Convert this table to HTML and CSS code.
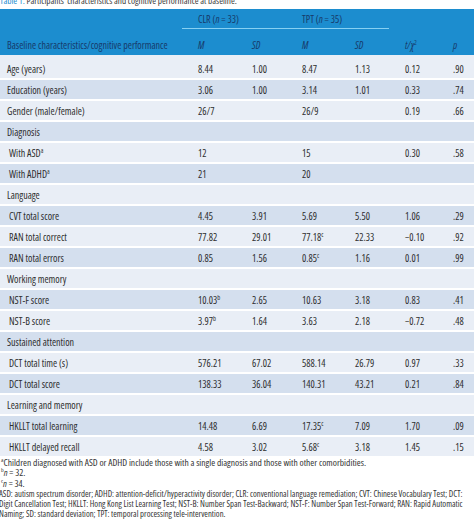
FILE: index.html
```html
<!DOCTYPE html>
<html>
<head>
<meta charset="utf-8">
<link rel="stylesheet" href="styles.css">
</head>
<body>
<div class="page">
  <div class="caption"><span class="cap-label">Table 1.</span> Participants’ characteristics and cognitive performance at baseline.</div>
  <table class="data">
    <colgroup>
      <col class="c-label"><col class="c-m1"><col class="c-sd1"><col class="c-m2"><col class="c-sd2"><col class="c-t"><col class="c-p">
    </colgroup>
    <thead>
      <tr class="h1">
        <th></th>
        <th class="grp" colspan="2">CLR (<i>n</i> = 33)</th>
        <th class="grp" colspan="2">TPT (<i>n</i> = 35)</th>
        <th></th>
        <th></th>
      </tr>
      <tr class="h2">
        <th class="lbl">Baseline characteristics/cognitive performance</th>
        <th><i>M</i></th>
        <th><i>SD</i></th>
        <th><i>M</i></th>
        <th><i>SD</i></th>
        <th><i>t/χ</i><sup>2</sup></th>
        <th><i>p</i></th>
      </tr>
    </thead>
    <tbody>
      <tr class="first"><td>Age (years)</td><td>8.44</td><td>1.00</td><td>8.47</td><td>1.13</td><td>0.12</td><td>.90</td></tr>
      <tr><td>Education (years)</td><td>3.06</td><td>1.00</td><td>3.14</td><td>1.01</td><td>0.33</td><td>.74</td></tr>
      <tr><td>Gender (male/female)</td><td>26/7</td><td></td><td>26/9</td><td></td><td>0.19</td><td>.66</td></tr>
      <tr><td>Diagnosis</td><td></td><td></td><td></td><td></td><td></td><td></td></tr>
      <tr><td class="sub">With ASD<sup>a</sup></td><td>12</td><td></td><td>15</td><td></td><td>0.30</td><td>.58</td></tr>
      <tr><td class="sub">With ADHD<sup>a</sup></td><td>21</td><td></td><td>20</td><td></td><td></td><td></td></tr>
      <tr><td>Language</td><td></td><td></td><td></td><td></td><td></td><td></td></tr>
      <tr><td class="sub">CVT total score</td><td>4.45</td><td>3.91</td><td>5.69</td><td>5.50</td><td>1.06</td><td>.29</td></tr>
      <tr><td class="sub">RAN total correct</td><td>77.82</td><td>29.01</td><td>77.18<sup>c</sup></td><td>22.33</td><td>−0.10</td><td>.92</td></tr>
      <tr><td class="sub">RAN total errors</td><td>0.85</td><td>1.56</td><td>0.85<sup>c</sup></td><td>1.16</td><td>0.01</td><td>.99</td></tr>
      <tr><td>Working memory</td><td></td><td></td><td></td><td></td><td></td><td></td></tr>
      <tr><td class="sub">NST-F score</td><td>10.03<sup>b</sup></td><td>2.65</td><td>10.63</td><td>3.18</td><td>0.83</td><td>.41</td></tr>
      <tr><td class="sub">NST-B score</td><td>3.97<sup>b</sup></td><td>1.64</td><td>3.63</td><td>2.18</td><td>−0.72</td><td>.48</td></tr>
      <tr><td>Sustained attention</td><td></td><td></td><td></td><td></td><td></td><td></td></tr>
      <tr><td class="sub">DCT total time (s)</td><td>576.21</td><td>67.02</td><td>588.14</td><td>26.79</td><td>0.97</td><td>.33</td></tr>
      <tr><td class="sub">DCT total score</td><td>138.33</td><td>36.04</td><td>140.31</td><td>43.21</td><td>0.21</td><td>.84</td></tr>
      <tr><td>Learning and memory</td><td></td><td></td><td></td><td></td><td></td><td></td></tr>
      <tr><td class="sub">HKLLT total learning</td><td>14.48</td><td>6.69</td><td>17.35<sup>c</sup></td><td>7.09</td><td>1.70</td><td>.09</td></tr>
      <tr><td class="sub">HKLLT delayed recall</td><td>4.58</td><td>3.02</td><td>5.68<sup>c</sup></td><td>3.18</td><td>1.45</td><td>.15</td></tr>
    </tbody>
  </table>
  <div class="notes">
    <div class="note n-a"><sup>a</sup>Children diagnosed with ASD or ADHD include those with a single diagnosis and those with other comorbidities.</div>
    <div class="note n-a"><sup>b</sup><i>n</i> = 32.</div>
    <div class="note n-a"><sup>c</sup><i>n</i> = 34.</div>
    <div class="note n-abbr">ASD: autism spectrum disorder; ADHD: attention-deficit/hyperactivity disorder; CLR: conventional language remediation; CVT: Chinese Vocabulary Test; DCT:<br>Digit Cancellation Test; HKLLT: Hong Kong List Learning Test; NST-B: Number Span Test-Backward; NST-F: Number Span Test-Forward; RAN: Rapid Automatic<br>Naming; SD: standard deviation; TPT: temporal processing tele-intervention.</div>
  </div>
</div>
</body>
</html>
```
FILE: styles.css
```css
html, body {
  margin: 0;
  padding: 0;
  background: #ffffff;
}
.page {
  width: 474px;
  height: 520px;
  overflow: hidden;
  font-family: "Open Sans", "Liberation Sans", sans-serif;
  font-stretch: 75%;
  color: #333333;
}
.caption {
  font-size: 9.2px;
  line-height: 12px;
  margin-top: -5px;
  height: 12px;
  margin-bottom: 2px;
  white-space: nowrap;
  color: #3a3a3a;
}
.cap-label {
  color: #1c8dcf;
}
.data {
  width: 474px;
  table-layout: fixed;
  border-collapse: separate;
  border-spacing: 0;
  font-size: 10px;
}
.c-label { width: 182px; }
.c-m1 { width: 54px; }
.c-sd1 { width: 50px; }
.c-m2 { width: 53px; }
.c-sd2 { width: 50px; }
.c-t { width: 48px; }
.c-p { width: 37px; }
.data th,
.data td {
  padding: 0 0 0 16px;
  text-align: left;
  white-space: nowrap;
  font-weight: normal;
  vertical-align: middle;
}
.data th:first-child,
.data td:first-child {
  padding-left: 7px;
}
.data td.sub {
  padding-left: 9px;
}
thead th {
  background: #1c8dcf;
  color: #173a6a;
}
.h1 th {
  height: 19px;
}
.h1 th.grp {
  border-bottom: 1px solid #86d0f2;
}
.h2 th {
  height: 26px;
  padding-top: 5px;
  box-sizing: border-box;
}
tbody td {
  height: 19px;
  border-bottom: 2px solid #ffffff;
  background: #e9eef6;
  color: #2e2e2e;
}
tbody tr:nth-child(even) td {
  background: #d4dfee;
}
tbody tr.first td {
  height: 25px;
  padding-top: 4px;
  box-sizing: border-box;
}
sup {
  font-size: 6.5px;
  line-height: 0;
  vertical-align: 4px;
}
.notes {
  margin-top: 0;
  font-size: 9.5px;
  line-height: 10.3px;
  color: #333333;
  white-space: nowrap;
}
.note sup {
  font-size: 6px;
}
.n-a {
  padding-left: 1px;
}
.n-abbr {
  margin-left: -1px;
  font-size: 8.7px;
}
```
